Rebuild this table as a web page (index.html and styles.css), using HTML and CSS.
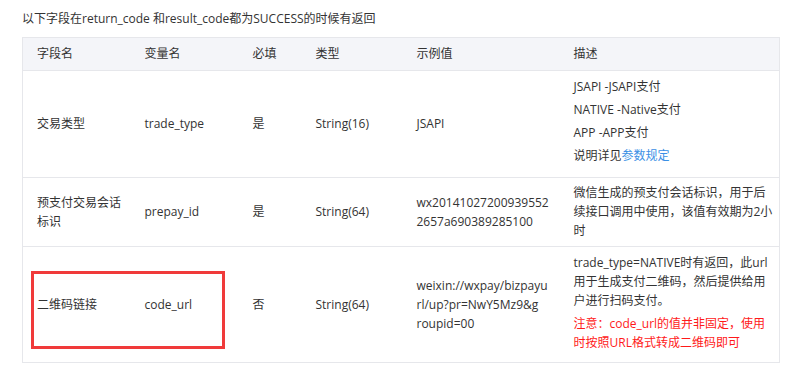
FILE: index.html
```html
<!DOCTYPE html>
<html lang="zh-CN">
<head>
<meta charset="utf-8">
<link rel="stylesheet" href="styles.css">
</head>
<body>
<div class="page">
  <p class="intro">以下字段在return_code 和result_code都为SUCCESS的时候有返回</p>
  <div class="table-wrap">
    <table class="params">
      <colgroup>
        <col class="c1"><col class="c2"><col class="c3"><col class="c4"><col class="c5"><col class="c6">
      </colgroup>
      <thead>
        <tr><th>字段名</th><th>变量名</th><th>必填</th><th>类型</th><th>示例值</th><th>描述</th></tr>
      </thead>
      <tbody>
        <tr class="r1">
          <td>交易类型</td><td>trade_type</td><td>是</td><td>String(16)</td><td>JSAPI</td>
          <td class="desc">
            <p>JSAPI -JSAPI支付</p>
            <p>NATIVE -Native支付</p>
            <p>APP -APP支付</p>
            <p>说明详见<a class="link" href="#">参数规定</a></p>
          </td>
        </tr>
        <tr class="r2">
          <td>预支付交易会话标识</td><td>prepay_id</td><td>是</td><td>String(64)</td><td>wx201410272009395522657a690389285100</td>
          <td class="desc">微信生成的预支付会话标识，用于后续接口调用中使用，该值有效期为2小时</td>
        </tr>
        <tr class="r3">
          <td>二维码链接</td><td>code_url</td><td>否</td><td>String(64)</td><td>weixin://wxpay/bizpayurl/up?pr=NwY5Mz9&amp;g<br>roupid=00</td>
          <td class="desc">
            <p>trade_type=NATIVE时有返回，此url用于生成支付二维码，然后提供给用户进行扫码支付。</p>
            <p class="warn">注意：code_url的值并非固定，使用时按照URL格式转成二维码即可</p>
          </td>
        </tr>
      </tbody>
    </table>
    <div class="mark"></div>
  </div>
</div>
</body>
</html>
```
FILE: styles.css
```css
html, body {
  margin: 0;
  padding: 0;
  background: #fff;
}
body {
  font-family: "Open Sans", "Noto Sans CJK SC", sans-serif;
  font-size: 12px;
  color: #333;
}
.page {
  padding: 9px 22px 0 22px;
  width: 757px;
}
.intro {
  margin: 0 0 9px 0;
  line-height: 19px;
}
.table-wrap {
  position: relative;
}
.params {
  width: 757px;
  border-collapse: collapse;
  table-layout: fixed;
  border: 1px solid #e6e7eb;
}
.c1 { width: 108px; }
.c2 { width: 108px; }
.c3 { width: 63px; }
.c4 { width: 101px; }
.c5 { width: 157px; }
.c6 { width: 220px; }
th, td {
  text-align: left;
  vertical-align: middle;
  line-height: 19px;
  padding: 5px 8px 6px 14px;
  border-bottom: 1px solid #e6e7eb;
  word-break: break-all;
}
th {
  font-weight: normal;
  background: #f4f5f9;
  height: 21px;
}
td.desc {
  padding-right: 6px;
}
.desc p {
  margin: 0 0 4px 0;
}
.r1 td { padding-top: 6px; padding-bottom: 8px; }
.r3 td { padding-top: 6px; padding-bottom: 6px; }
.link {
  color: #3b8fe5;
  text-decoration: none;
}
.warn {
  color: #ff1a1a;
}
.mark {
  position: absolute;
  left: 9px;
  top: 234px;
  width: 188px;
  height: 72px;
  border: 3px solid #f03a3a;
}
```
